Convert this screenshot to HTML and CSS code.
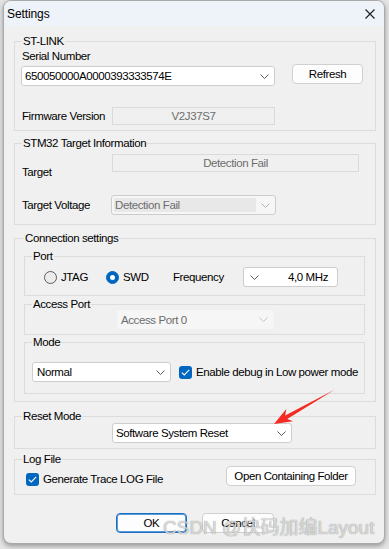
FILE: index.html
```html
<!DOCTYPE html>
<html lang="en">
<head>
  <meta charset="UTF-8">
  <title>Settings</title>
  <link rel="stylesheet" href="styles.css">
</head>
<body>
  <div class="win">
    <div class="titlebar">
      <span class="title">Settings</span>
      <svg class="close" width="10" height="10" viewBox="0 0 10 10"><path d="M0.5 0.5 L9.5 9.5 M9.5 0.5 L0.5 9.5" stroke="#1c1c1c" stroke-width="1.1"/></svg>
    </div>

    <div class="content">
      <fieldset class="grp stlink">
        <legend>ST-LINK</legend>
        <div class="lbl">Serial Number</div>
        <div class="row serial-row">
          <div class="combo serial"><span class="val">650050000A0000393333574E</span><svg class="chev" width="9" height="5" viewBox="0 0 9 5"><path d="M0.5 0.5 L4.5 4.5 L8.5 0.5" fill="none" stroke="#5a5a5a"/></svg></div>
          <button class="btn refresh">Refresh</button>
        </div>
        <div class="row fw-row">
          <span class="lbl w90">Firmware Version</span>
          <div class="field fw">V2J37S7</div>
        </div>
      </fieldset>

      <fieldset class="grp stm32">
        <legend>STM32 Target Information</legend>
        <div class="row target-row">
          <span class="lbl w90 target-lbl">Target</span>
          <div class="field target">Detection Fail</div>
        </div>
        <div class="row volt-row">
          <span class="lbl w89">Target Voltage</span>
          <div class="combo volt off"><span class="val sel">Detection Fail</span><svg class="chev" width="9" height="5" viewBox="0 0 9 5"><path d="M0.5 0.5 L4.5 4.5 L8.5 0.5" fill="none" stroke="#b4b4b4"/></svg></div>
        </div>
      </fieldset>

      <fieldset class="grp conn">
        <legend>Connection settings</legend>

        <fieldset class="grp port">
          <legend>Port</legend>
          <div class="row port-row">
            <label class="opt jtag"><span class="radio"></span>JTAG</label>
            <label class="opt swd"><span class="radio on"></span>SWD</label>
            <span class="freq-lbl">Frequency</span>
            <div class="combo freq"><svg class="chev" width="9" height="5" viewBox="0 0 9 5"><path d="M0.5 0.5 L4.5 4.5 L8.5 0.5" fill="none" stroke="#5a5a5a"/></svg><span class="val">4,0 MHz</span></div>
          </div>
        </fieldset>

        <fieldset class="grp access">
          <legend>Access Port</legend>
          <div class="combo ap off"><span class="val">Access Port 0</span><svg class="chev" width="9" height="5" viewBox="0 0 9 5"><path d="M0.5 0.5 L4.5 4.5 L8.5 0.5" fill="none" stroke="#c4c4c4"/></svg></div>
        </fieldset>

        <fieldset class="grp mode">
          <legend>Mode</legend>
          <div class="row mode-row">
            <div class="combo mode-sel"><span class="val">Normal</span><svg class="chev" width="9" height="5" viewBox="0 0 9 5"><path d="M0.5 0.5 L4.5 4.5 L8.5 0.5" fill="none" stroke="#5a5a5a"/></svg></div>
            <label class="check lowpower"><span class="box"><svg width="9" height="7" viewBox="0 0 9 7"><path d="M0.8 3.6 L3.3 6 L8.2 0.9" fill="none" stroke="#fff" stroke-width="1.1"/></svg></span>Enable debug in Low power mode</label>
          </div>
        </fieldset>
      </fieldset>

      <fieldset class="grp reset">
        <legend>Reset Mode</legend>
        <div class="combo reset-sel"><span class="val">Software System Reset</span><svg class="chev" width="9" height="5" viewBox="0 0 9 5"><path d="M0.5 0.5 L4.5 4.5 L8.5 0.5" fill="none" stroke="#5a5a5a"/></svg></div>
      </fieldset>

      <fieldset class="grp log">
        <legend>Log File</legend>
        <div class="row log-row">
          <label class="check trace"><span class="box"><svg width="9" height="7" viewBox="0 0 9 7"><path d="M0.8 3.6 L3.3 6 L8.2 0.9" fill="none" stroke="#fff" stroke-width="1.1"/></svg></span>Generate Trace LOG File</label>
          <button class="btn folder">Open Containing Folder</button>
        </div>
      </fieldset>

      <div class="row actions">
        <button class="btn ok">OK</button>
        <button class="btn cancel">Cancel</button>
      </div>
    </div>

    <div class="watermark">CSDN @快码加编Layout</div>
  </div>

  <svg class="arrow" width="389" height="549" viewBox="0 0 389 549">
    <polygon points="274,424 293,421.3 287.2,418.9 334.5,389.8 285.2,415.5 286.3,409.1" fill="#f52a22"/>
  </svg>
</body>
</html>
```

FILE: styles.css
```css
* { box-sizing: border-box; }
body { margin: 0; background: #e4e4e4; font-family: "Liberation Sans", Arial, sans-serif; font-size: 11.5px; letter-spacing: -0.4px; color: #000; position: relative; height: 549px; overflow: hidden; }

.win { position: relative; margin-left: 3px; width: 382px; height: 544px; background: #f0f0f0; border: 1px solid #a9a9a9; border-radius: 8px; overflow: hidden; box-shadow: 0 2px 5px rgba(0,0,0,0.35); }
.titlebar { height: 25px; background: #eef2f9; display: flex; align-items: center; padding-left: 3px; }
.title { font-size: 12px; letter-spacing: -0.1px; }
.close { margin-left: auto; margin-right: 9px; }

.content { padding: 8px 8px 0 10px; }
.row { display: flex; }
.lbl { line-height: 15px; white-space: nowrap; }
.w90 { width: 90px; }
.w89 { width: 89px; }

.grp { margin: 0; min-width: 0; border: 1px solid #dcdcdc; padding: 0 12px 5px 7px; }
legend { padding: 0 1px; line-height: 15px; }

.combo { display: flex; flex-shrink: 0; align-items: center; height: 20px; background: #fff; border: 1px solid #cdcdcd; border-radius: 3px; padding: 0 5px 0 3px; white-space: nowrap; }
.combo .val { flex: 1; }
.combo.off { background: #f6f6f6; color: #6d6d6d; }
.field { height: 18px; border: 1px solid #dadada; background: #f0f0f0; color: #6d6d6d; text-align: center; line-height: 16px; }

.btn { font: inherit; letter-spacing: inherit; color: #000; height: 20px; background: #fdfdfd; border: 1px solid #d0d0d0; border-radius: 4px; padding: 0; margin: 0; flex-shrink: 0; }

/* ST-LINK */
.serial-row { justify-content: space-between; align-items: flex-start; }
.serial { width: 254px; margin-top: 2px; margin-left: -1px; }
.refresh { width: 71px; }
.fw-row { margin-top: 21px; align-items: center; }
.fw { width: 163px; }

/* STM32 */
.stm32 { margin-top: 5px; padding-bottom: 9px; }
.target-row { margin-top: 3px; align-items: flex-start; }
.target-lbl { margin-top: 11px; }
.target { width: 247px; }
.volt-row { margin-top: 15px; align-items: center; }
.volt { width: 165px; padding-left: 2px; }
.volt .sel { flex: 0 0 142px; background: #e8e8e8; line-height: 14px; padding-left: 1px; margin-right: auto; }

/* Connection */
.conn { margin-top: 6px; padding: 0 10px 7px 9px; }
.port { margin-top: 3px; padding: 3px 7px 8px 7px; }
.port-row { align-items: center; height: 20px; }
.opt { display: flex; align-items: center; }
.jtag { margin-left: 12px; width: 62px; }
.swd { width: 67px; }
.radio { width: 13px; height: 13px; border-radius: 50%; border: 1px solid #5c5c5c; background: #ececec; margin-right: 4px; position: relative; }
.radio.on { border-color: #0067c0; background: #0067c0; }
.radio.on::after { content: ""; position: absolute; left: 3px; top: 3px; width: 5px; height: 5px; border-radius: 50%; background: #fff; }
.freq-lbl { width: 70px; }
.freq { width: 95px; padding: 0 9px 0 6px; }
.freq .val { text-align: right; }

.access { margin-top: 1px; }
.ap { width: 157px; height: 19px; margin-top: -2px; margin-left: 85px; border-color: #f6f6f6; color: #8c8c8c; padding-left: 3px; }

.mode { padding: 12px 4px 11px 7px; }
.mode-row { align-items: center; }
.mode-sel { width: 139px; padding-left: 4px; }
.check { display: flex; align-items: center; line-height: 15px; white-space: nowrap; }
.box { width: 13px; height: 13px; flex-shrink: 0; border-radius: 3px; background: #0067c0; margin-right: 4px; display: flex; align-items: center; justify-content: center; }
.lowpower { margin-left: 8px; }

/* Reset / Log */
.reset { margin-top: 7px; }
.reset-sel { width: 180px; margin-left: 90px; margin-top: -1px; padding-left: 3px; }
.log { margin-top: 3px; padding-bottom: 7px; }
.log-row { margin-top: -1px; align-items: flex-start; }
.trace { margin-left: 4px; margin-top: 6px; }
.folder { width: 130px; margin-left: auto; margin-right: 7px; }

.actions { margin-top: 18px; }
.ok { width: 71px; margin-left: 102px; border-color: #1a6fc4; box-shadow: inset 0 0 0 1px #5b9ad6; }
.cancel { width: 72px; margin-left: 15px; }

.watermark { position: absolute; left: 159px; top: 516px; font-size: 19px; line-height: 22px; letter-spacing: 0; font-family: "Liberation Sans", "Noto Sans CJK SC", sans-serif; color: rgba(245,245,245,0.75); text-shadow: 0 0 1px rgba(60,60,60,0.7); white-space: nowrap; }
.arrow { position: absolute; left: 0; top: 0; pointer-events: none; }
```
